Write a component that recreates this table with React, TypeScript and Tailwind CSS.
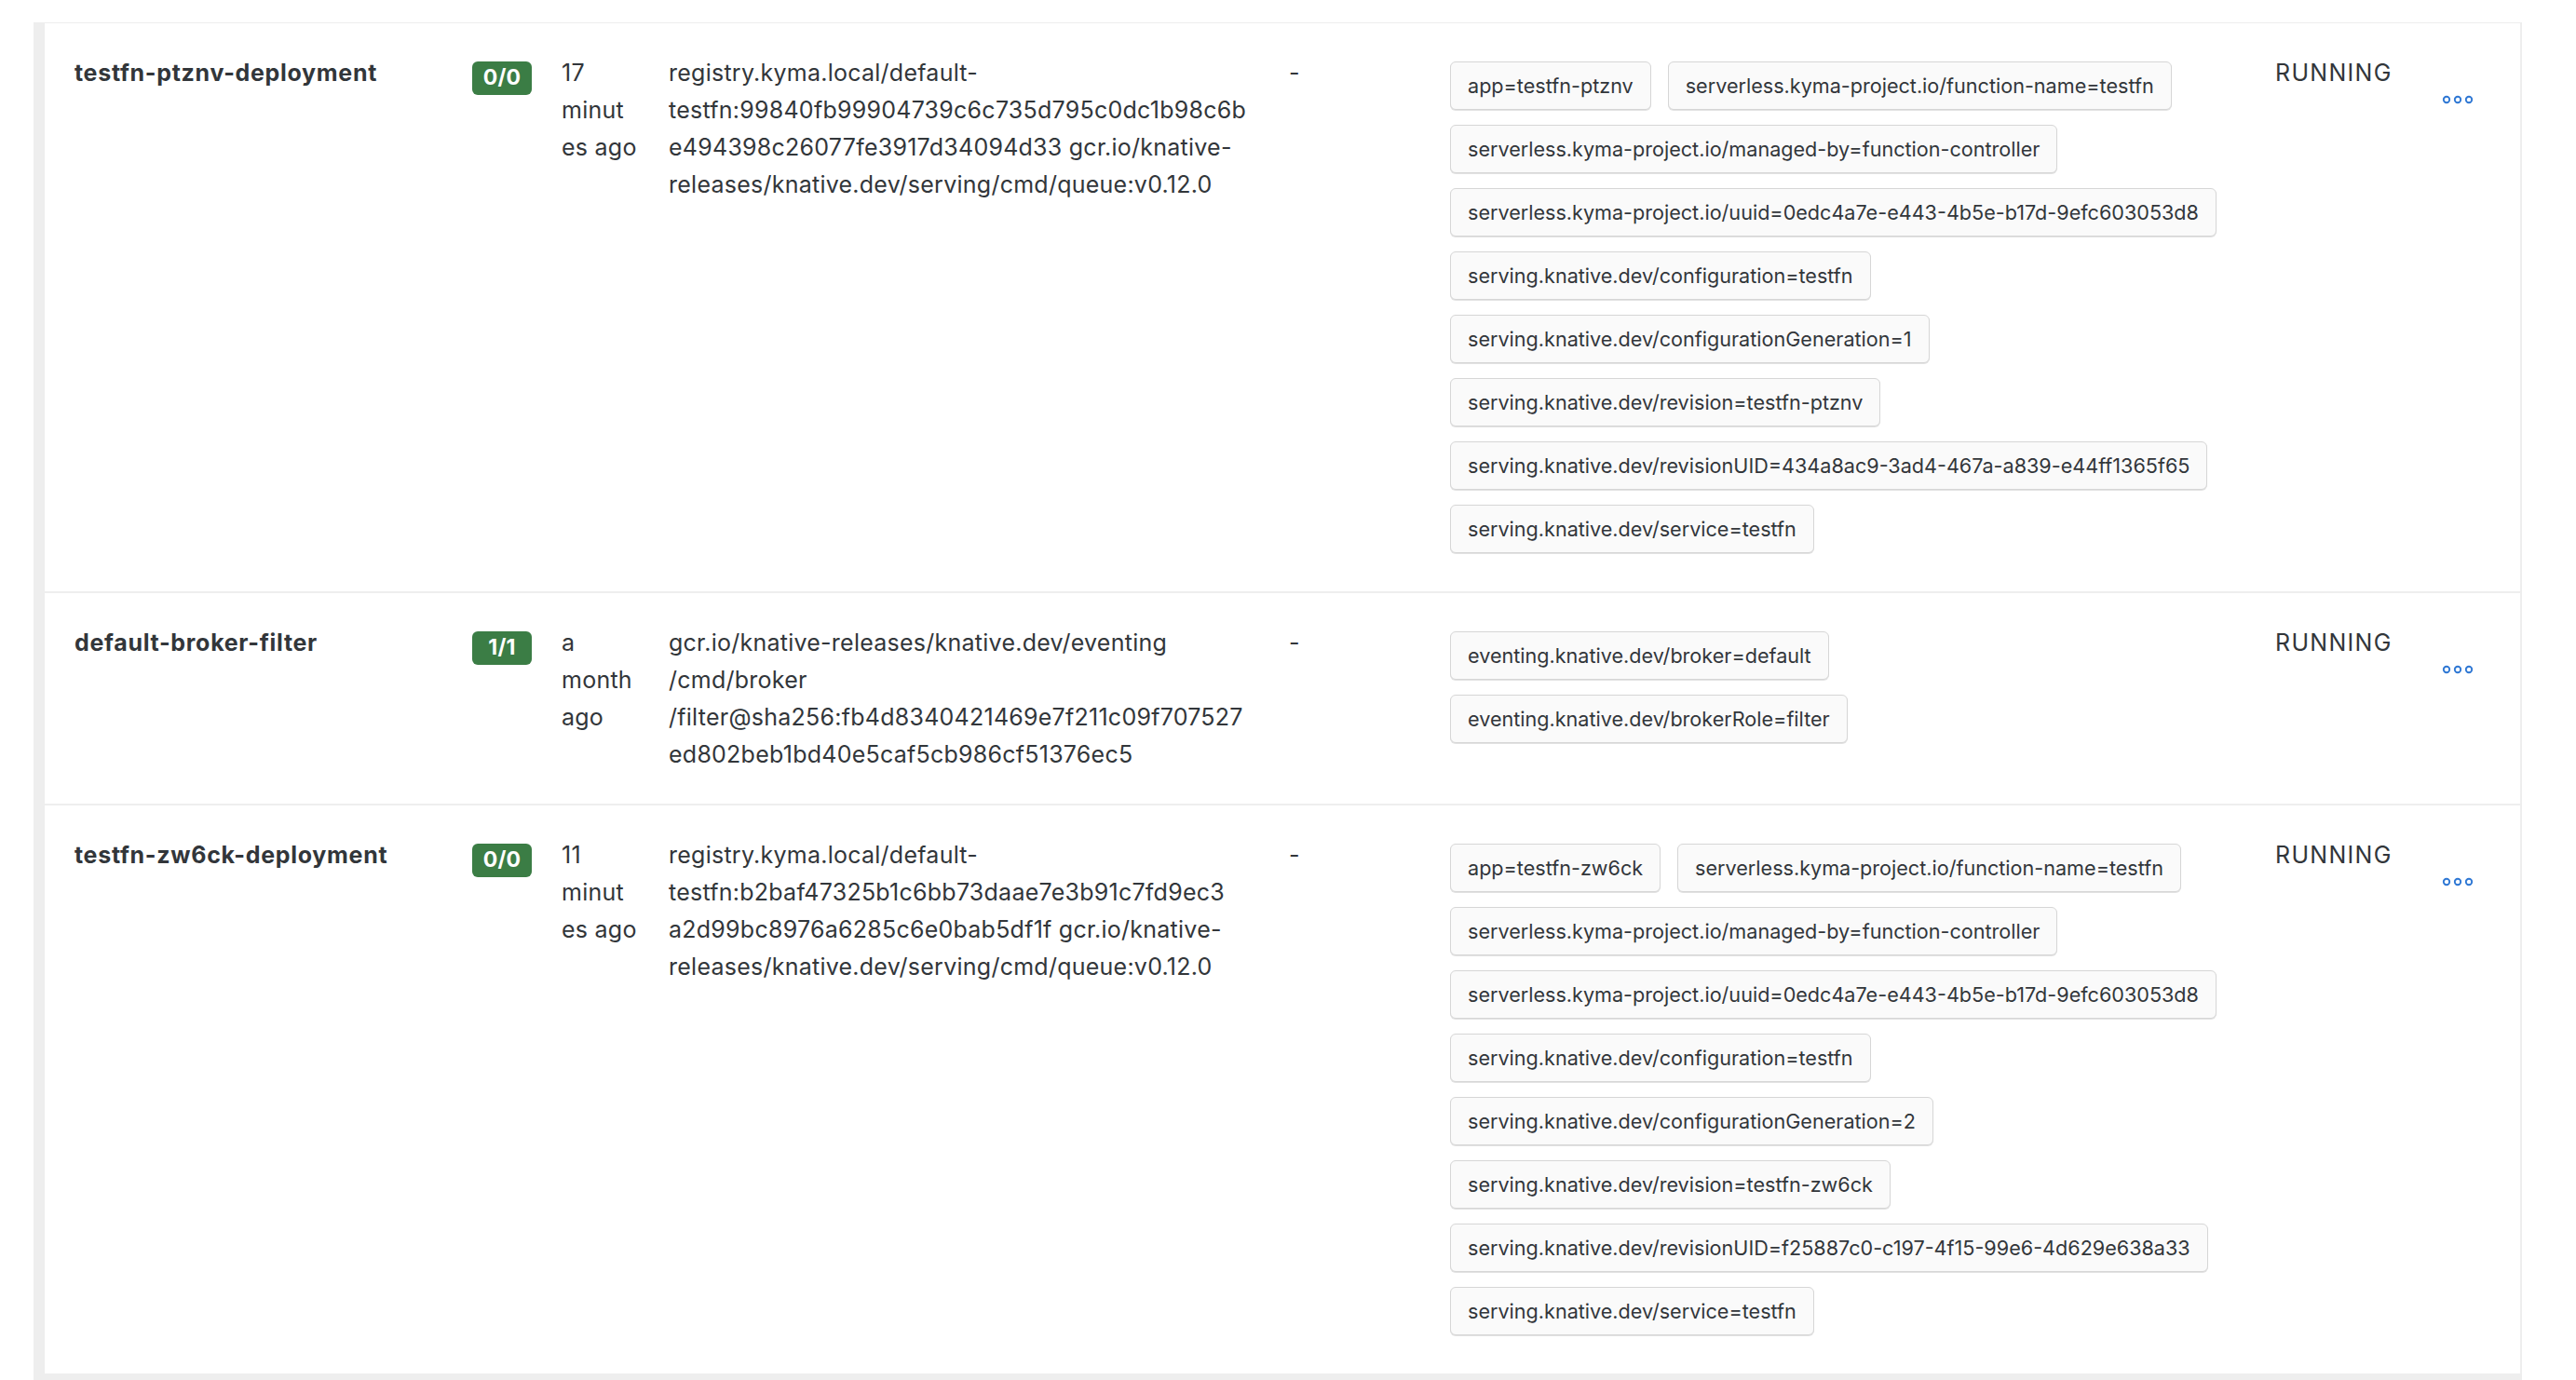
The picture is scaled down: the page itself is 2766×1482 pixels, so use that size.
type Pod = {
  name: string;
  ready: string;
  age: string[];
  image: string[];
  labels: string[];
  status: string;
};

const pods: Pod[] = [
  {
    name: "testfn-ptznv-deployment",
    ready: "0/0",
    age: ["17", "minut", "es ago"],
    image: [
      "registry.kyma.local/default-",
      "testfn:99840fb99904739c6c735d795c0dc1b98c6b",
      "e494398c26077fe3917d34094d33 gcr.io/knative-",
      "releases/knative.dev/serving/cmd/queue:v0.12.0",
    ],
    labels: [
      "app=testfn-ptznv",
      "serverless.kyma-project.io/function-name=testfn",
      "serverless.kyma-project.io/managed-by=function-controller",
      "serverless.kyma-project.io/uuid=0edc4a7e-e443-4b5e-b17d-9efc603053d8",
      "serving.knative.dev/configuration=testfn",
      "serving.knative.dev/configurationGeneration=1",
      "serving.knative.dev/revision=testfn-ptznv",
      "serving.knative.dev/revisionUID=434a8ac9-3ad4-467a-a839-e44ff1365f65",
      "serving.knative.dev/service=testfn",
    ],
    status: "RUNNING",
  },
  {
    name: "default-broker-filter",
    ready: "1/1",
    age: ["a", "month", "ago"],
    image: [
      "gcr.io/knative-releases/knative.dev/eventing",
      "/cmd/broker",
      "/filter@sha256:fb4d8340421469e7f211c09f707527",
      "ed802beb1bd40e5caf5cb986cf51376ec5",
    ],
    labels: [
      "eventing.knative.dev/broker=default",
      "eventing.knative.dev/brokerRole=filter",
    ],
    status: "RUNNING",
  },
  {
    name: "testfn-zw6ck-deployment",
    ready: "0/0",
    age: ["11", "minut", "es ago"],
    image: [
      "registry.kyma.local/default-",
      "testfn:b2baf47325b1c6bb73daae7e3b91c7fd9ec3",
      "a2d99bc8976a6285c6e0bab5df1f gcr.io/knative-",
      "releases/knative.dev/serving/cmd/queue:v0.12.0",
    ],
    labels: [
      "app=testfn-zw6ck",
      "serverless.kyma-project.io/function-name=testfn",
      "serverless.kyma-project.io/managed-by=function-controller",
      "serverless.kyma-project.io/uuid=0edc4a7e-e443-4b5e-b17d-9efc603053d8",
      "serving.knative.dev/configuration=testfn",
      "serving.knative.dev/configurationGeneration=2",
      "serving.knative.dev/revision=testfn-zw6ck",
      "serving.knative.dev/revisionUID=f25887c0-c197-4f15-99e6-4d629e638a33",
      "serving.knative.dev/service=testfn",
    ],
    status: "RUNNING",
  },
];

function OverflowIcon() {
  return (
    <svg width="34" height="10" viewBox="0 0 34 10" aria-hidden>
      <circle cx="5" cy="5" r="3.2" fill="none" stroke="#2f78d4" strokeWidth="1.9" />
      <circle cx="17" cy="5" r="3.2" fill="none" stroke="#2f78d4" strokeWidth="1.9" />
      <circle cx="29" cy="5" r="3.2" fill="none" stroke="#2f78d4" strokeWidth="1.9" />
    </svg>
  );
}

function PodRow({ pod, last }: { pod: Pod; last: boolean }) {
  return (
    <div
      className={`grid grid-cols-[427px_96px_115px_666px_173px_886px_179px_1fr] py-[33px] pl-[32px] ${
        last ? "" : "border-b-2 border-[#eeeeee]"
      }`}
    >
      <div className="text-[25px] font-bold tracking-[0.7px]">{pod.name}</div>
      <div className="pt-[4px]">
        <span className="inline-flex h-[36px] w-[64px] items-center justify-center rounded-[6px] bg-[#3b7d45] text-[23px] font-bold leading-none text-white">
          {pod.ready}
        </span>
      </div>
      <div>
        {pod.age.map((line) => (
          <div key={line}>{line}</div>
        ))}
      </div>
      <div className="whitespace-nowrap">
        {pod.image.map((line) => (
          <div key={line}>{line}</div>
        ))}
      </div>
      <div>-</div>
      <div className="flex flex-wrap content-start gap-x-[18px] gap-y-[16px] py-[8px] pr-[36px]">
        {pod.labels.map((label) => (
          <span
            key={label}
            className="inline-flex h-[52px] items-center whitespace-nowrap rounded-[6px] border border-[#d6d6d6] bg-[#fafafa] px-[18px] text-[21.6px] tracking-normal shadow-[0_1px_0_#e2e2e2]"
          >
            {label}
          </span>
        ))}
      </div>
      <div className="tracking-[1.3px]">{pod.status}</div>
      <div className="pt-[44px]">
        <OverflowIcon />
      </div>
    </div>
  );
}

export default function App() {
  return (
    <div className="min-h-[1482px] bg-white pt-[24px] pl-[36px] font-['Inter',sans-serif] text-[25px] leading-[40px] tracking-[0.25px] text-[#32363a]">
      <div className="w-[2672px] bg-[#eeeeee] pt-px pr-[2px] pb-[11px] pl-[12px]">
        <div className="bg-white">
          {pods.map((pod, i) => (
            <PodRow key={pod.name} pod={pod} last={i === pods.length - 1} />
          ))}
        </div>
      </div>
    </div>
  );
}
